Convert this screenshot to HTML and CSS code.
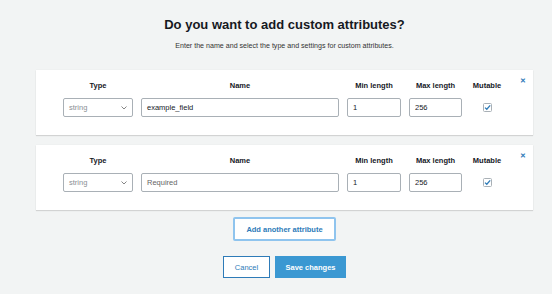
FILE: index.html
```html
<!DOCTYPE html>
<html lang="en">
<head>
    <meta charset="UTF-8">
    <title>Custom attributes</title>
    <link rel="stylesheet" href="styles.css">
</head>
<body>
    <div class="page">
        <h1>Do you want to add custom attributes?</h1>
        <p class="intro">Enter the name and select the type and settings for custom attributes.</p>

        <div class="attr-card">
            <span class="remove">&#10005;</span>
            <div class="attr-grid">
                <label>Type</label>
                <label>Name</label>
                <label>Min length</label>
                <label>Max length</label>
                <label>Mutable</label>

                <div class="select">
                    <span>string</span>
                    <svg width="6" height="4" viewBox="0 0 6 4"><path d="M0.5 0.5 L3 3 L5.5 0.5" fill="none" stroke="#777" stroke-width="0.9"/></svg>
                </div>
                <div class="field">example_field</div>
                <div class="field">1</div>
                <div class="field">256</div>
                <div class="check-cell">
                    <svg width="9" height="9" viewBox="0 0 9 9"><rect x="0.5" y="0.5" width="8" height="8" rx="1" fill="#fff" stroke="#a9b0b6"/><path d="M2 4.6 L3.8 6.3 L7.2 2.4" fill="none" stroke="#2e7bb8" stroke-width="1.3"/></svg>
                </div>
            </div>
        </div>

        <div class="attr-card">
            <span class="remove">&#10005;</span>
            <div class="attr-grid">
                <label>Type</label>
                <label>Name</label>
                <label>Min length</label>
                <label>Max length</label>
                <label>Mutable</label>

                <div class="select">
                    <span>string</span>
                    <svg width="6" height="4" viewBox="0 0 6 4"><path d="M0.5 0.5 L3 3 L5.5 0.5" fill="none" stroke="#777" stroke-width="0.9"/></svg>
                </div>
                <div class="field placeholder">Required</div>
                <div class="field">1</div>
                <div class="field">256</div>
                <div class="check-cell">
                    <svg width="9" height="9" viewBox="0 0 9 9"><rect x="0.5" y="0.5" width="8" height="8" rx="1" fill="#fff" stroke="#a9b0b6"/><path d="M2 4.6 L3.8 6.3 L7.2 2.4" fill="none" stroke="#2e7bb8" stroke-width="1.3"/></svg>
                </div>
            </div>
        </div>

        <div class="add-row">
            <button type="button" class="button add-button">Add another attribute</button>
        </div>

        <div class="button-group">
            <button type="button" class="button cancel-button">Cancel</button>
            <button type="button" class="button save-button">Save changes</button>
        </div>
    </div>
</body>
</html>
```

FILE: styles.css
```css
body {
    margin: 0;
    padding: 0;
    background-color: #f2f4f4;
    color: #16191f;
    font-family: "Liberation Sans", Arial, sans-serif;
}

.page {
    padding: 17px 19px 0 36px;
}

h1 {
    margin: 0;
    font-size: 13px;
    font-weight: bold;
    text-align: center;
    line-height: 16px;
}

.intro {
    margin: 8px 0 0;
    font-size: 7.1px;
    color: #333;
    text-align: center;
    line-height: 10px;
}

.attr-card {
    position: relative;
    margin-top: 19px;
    background-color: #fff;
    box-shadow: 0 1px 1px rgba(0, 0, 0, 0.12), 0 0 1px rgba(0, 0, 0, 0.08);
    padding: 12px 0 18px 27px;
}

.attr-card + .attr-card {
    margin-top: 10px;
}

.remove {
    position: absolute;
    top: 7px;
    right: 7px;
    color: #2e7bb8;
    font-size: 7px;
    font-weight: bold;
}

.attr-grid {
    display: grid;
    grid-template-columns: 70px 198px 54px 53px 34px;
    column-gap: 8px;
    row-gap: 8px;
    align-items: center;
}

.attr-grid label {
    font-size: 7.5px;
    font-weight: bold;
    text-align: center;
    line-height: 8px;
}

.select, .field {
    height: 19px;
    box-sizing: border-box;
    border: 1px solid #a9b0b6;
    border-radius: 2px;
    background-color: #fff;
    font-size: 7.5px;
    display: flex;
    align-items: center;
    padding: 0 5px;
}

.select {
    justify-content: space-between;
    color: #8a8f94;
}

.field {
    color: #16191f;
}

.field.placeholder {
    color: #666;
}

.check-cell {
    display: flex;
    justify-content: center;
}

.add-row {
    display: flex;
    justify-content: center;
    margin-top: 7px;
}

.button {
    font-family: "Liberation Sans", Arial, sans-serif;
    font-size: 7.5px;
    cursor: pointer;
    box-sizing: border-box;
}

.add-button {
    width: 103px;
    height: 24px;
    background-color: #fff;
    border: 2px solid #8fc4ee;
    border-radius: 2px;
    color: #2d7bb9;
    font-weight: bold;
}

.button-group {
    display: flex;
    justify-content: center;
    gap: 5px;
    margin-top: 15px;
}

.cancel-button {
    width: 47px;
    height: 22px;
    background-color: #fff;
    border: 1px solid #2e7bb8;
    color: #2e7bb8;
}

.save-button {
    width: 71px;
    height: 22px;
    background-color: #3b98d2;
    border: 1px solid #3b98d2;
    color: #fff;
    font-weight: bold;
}
```
